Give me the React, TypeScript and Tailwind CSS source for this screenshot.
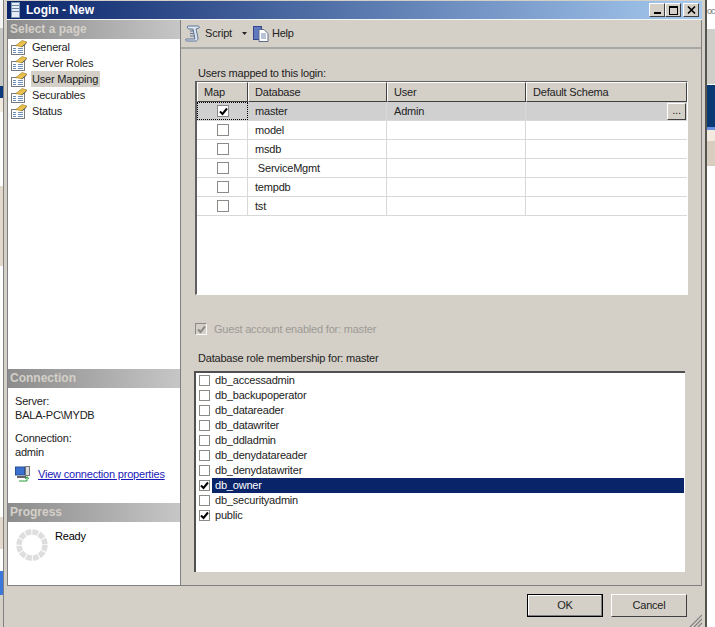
const font = "font-['Liberation_Sans',Arial,sans-serif]";

const pages = ["General", "Server Roles", "User Mapping", "Securables", "Status"];
const dbs = [
  { name: "master", user: "Admin", on: true },
  { name: "model" },
  { name: "msdb" },
  { name: " ServiceMgmt" },
  { name: "tempdb" },
  { name: "tst" },
];
const roles = [
  { name: "db_accessadmin" },
  { name: "db_backupoperator" },
  { name: "db_datareader" },
  { name: "db_datawriter" },
  { name: "db_ddladmin" },
  { name: "db_denydatareader" },
  { name: "db_denydatawriter" },
  { name: "db_owner", on: true, sel: true },
  { name: "db_securityadmin" },
  { name: "public", on: true },
];

function PageIcon() {
  return (
    <svg width="17" height="15" viewBox="0 0 17 15" className="shrink-0">
      <rect x="0.5" y="5.5" width="13" height="9" fill="#fff" stroke="#7a7a7a" />
      <path d="M2 8.500h3M7 8.500h5M2 10.500h3M7 10.500h5M2 12.500h3M7 12.500h5" stroke="#6f8fb8" />
      <path d="M5 5.500 L11 0.500 L16 2 L11 7 Z" fill="#e8c050" stroke="#9a7a20" strokeWidth="0.6" />
      <path d="M11 7 L15.500 3" stroke="#555" />
    </svg>
  );
}

function Check({ on, size = 12 }: { on?: boolean; size?: number }) {
  return (
    <span
      style={{ width: size, height: size }}
      className="shrink-0 border border-[#8a8a86] bg-white flex items-center justify-center"
    >
      {on && (
        <svg width="9" height="9" viewBox="0 0 9 9">
          <path d="M1 4.500 L3.500 7 L8 1.500" fill="none" stroke="#000" strokeWidth="2" />
        </svg>
      )}
    </span>
  );
}

function Head({ title }: { title: string }) {
  return (
    <div className="h-[19px] shrink-0 bg-[linear-gradient(to_right,#8c8c8c,#c6c6c6)] pl-[2px] text-[12px] tracking-normal leading-[19px] font-bold text-[#d4d0c8]">
      {title}
    </div>
  );
}

function WinBtn({ children }: { children: React.ReactNode }) {
  return (
    <span className="w-[16px] h-[14px] bg-[#d4d0c8] border border-t-white border-l-white border-r-[#404040] border-b-[#404040] flex items-center justify-center">
      {children}
    </span>
  );
}

function ColHead({ label, w }: { label: string; w: string }) {
  return (
    <div className={`${w} h-[20px] shrink-0 bg-[#d4d0c8] border border-t-white border-l-white border-r-[#404040] border-b-[#404040] pl-[6px] leading-[18px] text-[#222]`}>
      {label}
    </div>
  );
}

export default function App() {
  return (
    <div className={`${font} w-[715px] h-[627px] overflow-hidden flex bg-white text-[11px] tracking-[-0.2px] text-[#222]`}>
      {/* window behind the dialog, left edge */}
      <div className="w-[3px] shrink-0 flex flex-col bg-white">
        <div className="h-[28px] bg-[#f4f4f4]" />
        <div className="h-[58px] bg-[#c8c8c4]" />
        <div className="h-[12px] bg-[#0a3a7c]" />
        <div className="h-[14px] bg-[#f2e9df]" />
        <div className="h-[74px] bg-white" />
        <div className="h-[80px] bg-[#e2d8cb]" />
        <div className="h-[251px] bg-white" />
        <div className="h-[32px] bg-[#e2d8cb]" />
        <div className="h-[22px] bg-white" />
        <div className="h-[24px] bg-[#3c78dc]" />
        <div className="flex-1 bg-[#d4d0c8]" />
      </div>

      {/* dialog */}
      <div className="w-[704px] shrink-0 h-full flex flex-col bg-[#d4d0c8] border-l border-r-2 border-l-[#808080] border-r-[#55554f] pl-[3px] pr-[3px] pt-[1px]">
        <div className="h-[18px] shrink-0 flex items-center bg-[linear-gradient(to_right,#0a246a,#a6caf0)] pl-[4px] pr-[3px]">
          <svg width="9" height="16" viewBox="0 0 9 16" className="shrink-0">
            <rect x="0.5" y="0.5" width="8" height="15" fill="#e4ecf6" stroke="#7f97b8" />
            <path d="M1 3.500h7M1 6.500h7M1 9.500h7" stroke="#6a84a8" />
          </svg>
          <span className="ml-[6px] text-[12px] tracking-normal font-bold text-white">Login - New</span>
          <div className="ml-auto flex">
            <WinBtn><span className="w-[7px] h-[2px] bg-black mt-[6px]" /></WinBtn>
            <WinBtn><span className="w-[9px] h-[9px] border border-black border-t-2" /></WinBtn>
            <span className="w-[2px]" />
            <WinBtn>
              <svg width="9" height="8" viewBox="0 0 9 8"><path d="M1 0.500 L8 7.500 M8 0.500 L1 7.500" stroke="#000" strokeWidth="1.6" /></svg>
            </WinBtn>
          </div>
        </div>

        <div className="h-[567px] shrink-0 flex border-b border-b-[#808080] border-t border-t-[#f4f4f0]">
          {/* left panel */}
          <div className="w-[174px] shrink-0 flex flex-col bg-white border-r border-r-[#808080] border-l border-l-[#808080]">
            <Head title="Select a page" />
            <div className="flex flex-col h-[330px] shrink-0">
              {pages.map((p) => (
                <div key={p} className="h-[16px] flex items-center pl-[3px]">
                  <PageIcon />
                  <span className={`ml-[3px] px-[1px] h-[16px] leading-[16px] ${p === "User Mapping" ? "bg-[#d4d0c8] pr-[2px]" : ""}`}>{p}</span>
                </div>
              ))}
            </div>
            <Head title="Connection" />
            <div className="h-[115px] shrink-0 pl-[7px] pt-[6px] leading-[14px]">
              <div>Server:</div>
              <div>BALA-PC\MYDB</div>
              <div className="mt-[9px]">Connection:</div>
              <div>admin</div>
              <div className="flex items-center mt-[7px]">
                <svg width="17" height="16" viewBox="0 0 17 16" className="shrink-0">
                  <rect x="0.5" y="1" width="9" height="8" fill="#3a70d0" stroke="#27508f" />
                  <rect x="10.5" y="0.5" width="4" height="9" fill="#d8d8d8" stroke="#777" />
                  <path d="M2 11h9" stroke="#666" strokeWidth="2" />
                  <path d="M4 15h8v-4M10 13l2-2.500 2 2.500" fill="none" stroke="#2a9a3a" />
                </svg>
                <span className="ml-[6px] text-[#1a1ab8] underline whitespace-nowrap">View connection properties</span>
              </div>
            </div>
            <Head title="Progress" />
            <div className="flex-1 flex pl-[8px] pt-[7px]">
              <svg width="32" height="32" viewBox="0 0 32 32" className="shrink-0">
                <circle cx="16" cy="16" r="13" fill="none" stroke="#dedede" strokeWidth="5.500" strokeDasharray="5.800 1" />
              </svg>
              <span className="ml-[7px] text-black leading-[14px]">Ready</span>
            </div>
          </div>

          {/* right panel */}
          <div className="flex-1 flex flex-col min-w-0 border-r border-r-[#808080]">
            <div className="h-[29px] shrink-0 flex items-center border-b-2 border-b-[#a8a8a4] pl-[4px]">
              <svg width="17" height="17" viewBox="0 0 17 17" className="shrink-0">
                <path d="M3 1h10c1 0 2 1 1 2l-3 1 2 9c0 2-1 3-2 3H2c-1 0-2-1-1-2h9L8 4 4 4C2 4 2 1 3 1Z" fill="#dfe6f2" stroke="#5f7796" />
                <path d="M5 6h4M5 8.500h4M5 11h5" stroke="#5f7796" />
              </svg>
              <span className="ml-[3px]">Script</span>
              <svg width="5" height="3" viewBox="0 0 5 3" className="ml-[10px]"><path d="M0 0h5L2.500 3Z" fill="#222" /></svg>
              <svg width="16" height="17" viewBox="0 0 16 17" className="ml-[6px] shrink-0">
                <rect x="0.500" y="1.500" width="8" height="13" fill="#5f78c0" stroke="#34478a" />
                <path d="M6 4.500h5l4 4v8H6Z" fill="#fff" stroke="#5d6a88" />
                <path d="M8 9h5M8 11h5M8 13h5" stroke="#7387ad" />
              </svg>
              <span className="ml-[3px]">Help</span>
            </div>

            <div className="flex-1 min-h-0 pl-[14px] pr-[13px] pt-[17px] border-b border-b-[#d4d0c8]">
              <div className="leading-[14px] pl-[3px] mb-[1px]">Users mapped to this login:</div>
              <div className="w-[493px] h-[214px] border-l-2 border-t border-b border-r border-l-[#606060] border-t-[#606060] border-b-white border-r-white bg-white">
                <div className="flex">
                  <ColHead label="Map" w="w-[51px]" />
                  <ColHead label="Database" w="w-[139px]" />
                  <ColHead label="User" w="w-[139px]" />
                  <ColHead label="Default Schema" w="w-[161px]" />
                </div>
                {dbs.map((d) => (
                  <div key={d.name} className={`flex h-[19px] border-b border-b-[#d8d8d8] ${d.on ? "bg-[#d0d0d0]" : "bg-white"}`}>
                    <div className={`w-[51px] shrink-0 flex items-center justify-center pl-[2px] border-r ${d.on ? "outline-1 outline-dotted outline-black -outline-offset-1 border-r-transparent" : "border-r-[#d8d8d8]"}`}>
                      <Check on={d.on} />
                    </div>
                    <div className="w-[139px] shrink-0 pl-[7px] leading-[18px] border-r border-r-[#d8d8d8] whitespace-pre">{d.name}</div>
                    <div className="w-[139px] shrink-0 pl-[7px] leading-[18px] border-r border-r-[#d8d8d8]">{d.user}</div>
                    <div className="flex-1 flex justify-end items-start pr-[1px]">
                      {d.on && (
                        <span className="w-[19px] h-[17px] mt-[1px] bg-[#d4d0c8] border border-t-white border-l-white border-r-[#404040] border-b-[#404040] text-center leading-[13px]">...</span>
                      )}
                    </div>
                  </div>
                ))}
              </div>

              <div className="flex items-center mt-[27px] h-[14px] text-[#9c9a94]">
                <span className="w-[12px] h-[12px] border border-[#f8f8f4] border-t-[#8a8a86] border-l-[#8a8a86] bg-[#d4d0c8] flex items-center justify-center">
                  <svg width="9" height="9" viewBox="0 0 9 9"><path d="M1 4.500 L3.500 7 L8 1.500" fill="none" stroke="#8a8a86" strokeWidth="2" /></svg>
                </span>
                <span className="ml-[7px]">Guest account enabled for: master</span>
              </div>

              <div className="leading-[14px] mt-[15px] pl-[3px]">Database role membership for: master</div>
              <div className="w-[491px] h-[201px] mt-[6px] border-l-2 border-t-2 border-l-[#505050] border-t-[#505050] bg-white pl-[3px] pr-[1px] -ml-[1px]">
                {roles.map((r) => (
                  <div key={r.name} className="h-[15px] flex items-center">
                    <Check on={r.on} size={11} />
                    <span className={`ml-[2px] flex-1 pl-[3px] h-[15px] leading-[15px] ${r.sel ? "bg-[#0a246a] text-white" : ""}`}>{r.name}</span>
                  </div>
                ))}
              </div>
            </div>
          </div>
        </div>

        {/* footer */}
        <div className="flex-1 min-h-0 flex items-start justify-end pt-[8px] pr-[15px] relative">
          <button className="w-[76px] h-[23px] bg-[#d4d0c8] border border-black shadow-[inset_-1px_-1px_0_#808080,inset_1px_1px_0_#fff]">OK</button>
          <button className="w-[76px] h-[23px] ml-[8px] bg-[#d4d0c8] border border-t-white border-l-white border-r-[#404040] border-b-[#404040]">Cancel</button>
          <svg width="13" height="13" viewBox="0 0 13 13" className="absolute right-0 bottom-0">
            <path d="M1 13 L13 1 M5 13 L13 5 M9 13 L13 9" stroke="#808080" strokeWidth="1.200" />
          </svg>
        </div>
      </div>

      {/* window behind the dialog, right edge */}
      <div className="flex-1 flex flex-col bg-white relative">
        <div className="h-[28px] pt-[5px] text-[9px] tracking-[-1px] leading-[12px] text-[#777]">oc</div>
        <div className="h-[55px] mt-[1px] bg-[#d0cec8]" />
        <div className="h-[42px] mt-[1px] bg-[#0a3a74]" />
        <div className="h-[3px] bg-[#6a8ee0]" />
        <div className="h-[11px] bg-[#f2e9df]" />
        <div className="h-[25px] bg-[#d8cdbf]" />
      </div>
    </div>
  );
}
